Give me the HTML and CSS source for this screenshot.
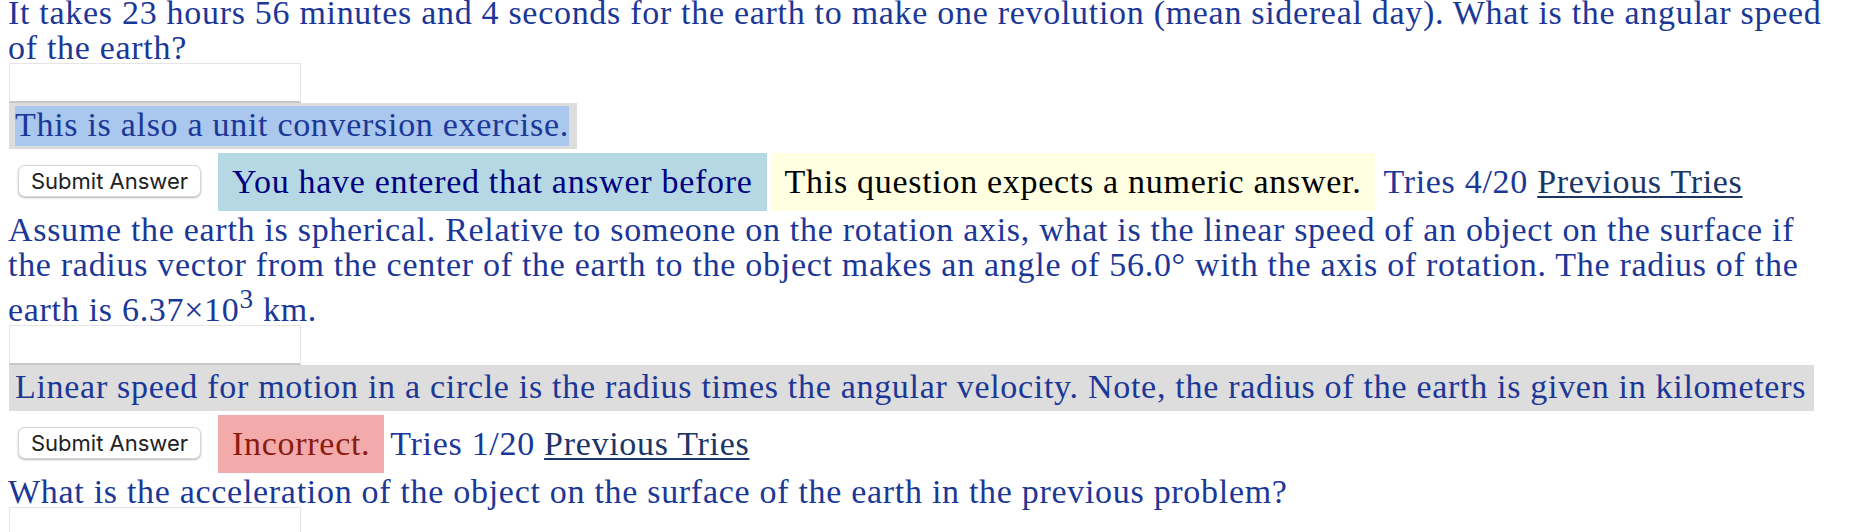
FILE: index.html
```html
<!DOCTYPE html>
<html lang="en">
<head>
<meta charset="utf-8">
<title>Angular speed problems</title>
<link rel="stylesheet" href="styles.css">
</head>
<body>
<div class="page">
  <section class="problem">
    <p class="question">It takes 23 hours 56 minutes and 4 seconds for the earth to make one revolution (mean sidereal day). What is the angular speed of the earth?</p>
    <input class="answer" type="text" aria-label="Answer">
    <div class="hint"><span class="selected">This is also a unit conversion exercise.</span></div>
    <div class="status-row">
      <button class="submit" type="button">Submit Answer</button>
      <span class="msg msg-repeat">You have entered that answer before</span>
      <span class="msg msg-numeric">This question expects a numeric answer.</span>
      <span class="tries">Tries 4/20 <a class="prev" href="#">Previous Tries</a></span>
    </div>
  </section>

  <section class="problem">
    <p class="question">Assume the earth is spherical. Relative to someone on the rotation axis, what is the linear speed of an object on the surface if the radius vector from the center of the earth to the object makes an angle of 56.0° with the axis of rotation. The radius of the earth is 6.37×10<sup>3</sup> km.</p>
    <input class="answer" type="text" aria-label="Answer">
    <div class="hint">Linear speed for motion in a circle is the radius times the angular velocity. Note, the radius of the earth is given in kilometers</div>
    <div class="status-row">
      <button class="submit" type="button">Submit Answer</button>
      <span class="msg msg-incorrect">Incorrect.</span>
      <span class="tries">Tries 1/20 <a class="prev" href="#">Previous Tries</a></span>
    </div>
  </section>

  <section class="problem">
    <p class="question">What is the acceleration of the object on the surface of the earth in the previous problem?</p>
    <input class="answer" type="text" aria-label="Answer">
  </section>
</div>
</body>
</html>
```

FILE: styles.css
```css
html, body {
  background: #ffffff;
}

body {
  margin: 0 8px;
  font-family: "Liberation Serif", "Times New Roman", Times, serif;
  font-size: 34px;
  line-height: 35px;
  letter-spacing: 0.7px;
  color: #1b3797;
  overflow: hidden;
}

.page {
  margin-top: -5px;
}

.question {
  margin: 0;
}

.question sup {
  font-size: 0.8em;
  vertical-align: 13px;
}

.answer {
  display: block;
  box-sizing: border-box;
  width: 292px;
  height: 40px;
  margin: -2px 0 0 1px;
  padding: 0 6px;
  border: 1px solid #e5e5e5;
  border-bottom: 2px solid #c6c6c6;
  background: #ffffff;
  font: 20px "Liberation Sans", Arial, sans-serif;
  outline: none;
}

.hint {
  width: fit-content;
  margin-left: 1px;
  padding: 4px 8px 7px 6px;
  background: #dddddd;
}

.selected {
  background: #aac7ed;
  padding-bottom: 3px;
}

.status-row {
  display: flex;
  align-items: flex-start;
  margin-top: 4px;
  margin-bottom: 1px;
}

.submit {
  box-sizing: border-box;
  height: 32px;
  margin: 12px 17px 0 10px;
  padding: 0 12px;
  border: 1px solid #d6d6d6;
  border-radius: 7px;
  background: #ffffff;
  box-shadow: 0 1px 2px rgba(0, 0, 0, 0.28);
  font-family: Inter, "Liberation Sans", Arial, sans-serif;
  font-size: 22px;
  line-height: 30px;
  letter-spacing: 0;
  color: #222222;
  white-space: nowrap;
}

.msg {
  padding: 11px 14px 12px;
  white-space: nowrap;
}

.msg-repeat {
  background: #b5d8e4;
  color: #000080;
  margin-right: 4px;
}

.msg-numeric {
  background: #ffffe2;
  color: #000000;
  margin-right: 8px;
}

.msg-incorrect {
  background: #f2abaa;
  color: #8b1a10;
  margin-right: 6px;
}

.tries {
  padding-top: 11px;
  white-space: nowrap;
}

.prev {
  color: #1b3566;
  text-decoration: underline;
  text-decoration-thickness: 1.5px;
  text-underline-offset: 3px;
}
```
